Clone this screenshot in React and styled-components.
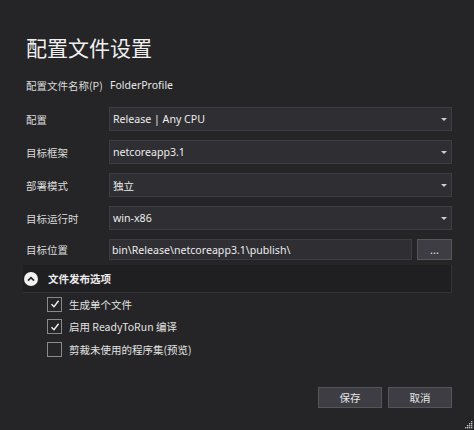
import React from "react";
import styled, { createGlobalStyle } from "styled-components";

const Global = createGlobalStyle`
  html, body { margin: 0; padding: 0; background: #252527; }
  body { font-family: "Noto Sans", "Noto Sans CJK SC", sans-serif; }
`;

const Dialog = styled.div`
  position: relative;
  width: 474px;
  height: 430px;
  box-sizing: border-box;
  background: #252527;
  color: #e6e6e6;
  padding: 33px 22px 0 26px;
  display: flex;
  flex-direction: column;
  font-size: 10.5px;
  font-family: "Noto Sans CJK SC", "Noto Sans", sans-serif;
`;

const Title = styled.h1`
  margin: 0;
  font-size: 21px;
  font-weight: 400;
  line-height: 28px;
  color: #f0f0f0;
`;

const NameRow = styled.div`
  display: flex;
  align-items: center;
  margin-top: 14px;
  height: 20px;
`;

const Label = styled.div`
  width: ${(p) => p.w || 83}px;
  flex: none;
  color: #dcdcdc;
  white-space: nowrap;
`;

const Value = styled.div`
  color: #e8e8e8;
  font-family: "Noto Sans", "Noto Sans CJK SC", sans-serif;
  font-size: 10.5px;
`;

const Form = styled.div`
  display: grid;
  grid-template-columns: 83px 1fr;
  row-gap: 9px;
  margin-top: 12px;
  align-items: center;
`;

const Select = styled.div`
  position: relative;
  height: 24px;
  box-sizing: border-box;
  background: #2f2f33;
  border: 1px solid #3c3c42;
  display: flex;
  align-items: center;
  padding-left: 3px;
  font-family: "Noto Sans", "Noto Sans CJK SC", sans-serif;
  font-size: 10.6px;
  color: #ececec;
`;

const Arrow = styled.span`
  position: absolute;
  right: 4px;
  top: 10px;
  width: 0;
  height: 0;
  border-left: 3px solid transparent;
  border-right: 3px solid transparent;
  border-top: 3px solid #cfcfcf;
`;

const PathRow = styled.div`
  display: flex;
  gap: 5px;
`;

const TextInput = styled.div`
  flex: 1;
  height: 21px;
  box-sizing: border-box;
  background: #2f2f33;
  border: 1px solid #3c3c42;
  display: flex;
  align-items: center;
  padding-left: 2px;
  font-family: "Noto Sans", "Noto Sans CJK SC", sans-serif;
  font-size: 10.6px;
  color: #ececec;
`;

const Button = styled.div`
  width: ${(p) => p.w || 64}px;
  height: 21px;
  box-sizing: border-box;
  background: #3d3d43;
  border: 1px solid #55555c;
  display: flex;
  align-items: center;
  justify-content: center;
  color: #e6e6e6;
  font-size: 10.5px;
`;

const Section = styled.div`
  margin: 5px 0 0 -3px;
  height: 28px;
  box-sizing: border-box;
  background: #1f1f21;
  border-bottom: 1px solid #333338;
  border-right: 1px solid #333338;
  display: flex;
  align-items: center;
  padding-left: 1px;
  gap: 10px;
`;

const Chevron = styled.div`
  width: 14px;
  height: 14px;
  border-radius: 50%;
  background: #f2f2f2;
  display: flex;
  align-items: center;
  justify-content: center;
`;

const SectionTitle = styled.div`
  font-weight: 700;
  color: #ececec;
`;

const Options = styled.div`
  display: flex;
  flex-direction: column;
  gap: 8.5px;
  margin: 4px 0 0 21px;
`;

const Option = styled.div`
  display: flex;
  align-items: center;
  gap: 7px;
  height: 14px;
  color: #e2e2e2;
`;

const Box = styled.div`
  width: 15px;
  height: 15px;
  box-sizing: border-box;
  border: 1px solid #8a8a8e;
  background: #252527;
  display: flex;
  align-items: center;
  justify-content: center;
`;

const Footer = styled.div`
  margin-top: auto;
  margin-bottom: 22px;
  display: flex;
  justify-content: flex-end;
  gap: 6px;
`;

const Grip = styled.svg`
  position: absolute;
  right: 1px;
  bottom: 1px;
`;

const Check = () => (
  <svg width="10" height="10" viewBox="0 0 10 10">
    <path d="M1.5 5.2 L4 7.8 L8.6 1.8" fill="none" stroke="#f0f0f0" strokeWidth="1.4" />
  </svg>
);

const rows = [
  ["配置", "Release | Any CPU"],
  ["目标框架", "netcoreapp3.1"],
  ["部署模式", "独立"],
  ["目标运行时", "win-x86"],
];

export default function App() {
  return (
    <>
      <Global />
      <Dialog>
        <Title>配置文件设置</Title>
        <NameRow>
          <Label w={84}>配置文件名称(P)</Label>
          <Value>FolderProfile</Value>
        </NameRow>
        <Form>
          {rows.map(([l, v]) => (
            <React.Fragment key={l}>
              <Label>{l}</Label>
              <Select>
                {v}
                <Arrow />
              </Select>
            </React.Fragment>
          ))}
          <Label>目标位置</Label>
          <PathRow>
            <TextInput>bin\Release\netcoreapp3.1\publish\</TextInput>
            <Button w={35}>...</Button>
          </PathRow>
        </Form>
        <Section>
          <Chevron>
            <svg width="8" height="6" viewBox="0 0 8 6">
              <path d="M1 4.6 L4 1.6 L7 4.6" fill="none" stroke="#252527" strokeWidth="1.6" />
            </svg>
          </Chevron>
          <SectionTitle>文件发布选项</SectionTitle>
        </Section>
        <Options>
          <Option>
            <Box><Check /></Box>
            生成单个文件
          </Option>
          <Option>
            <Box><Check /></Box>
            启用 ReadyToRun 编译
          </Option>
          <Option>
            <Box />
            剪裁未使用的程序集(预览)
          </Option>
        </Options>
        <Footer>
          <Button>保存</Button>
          <Button>取消</Button>
        </Footer>
        <Grip width="8" height="8" viewBox="0 0 8 8">
          {[[6, 0], [6, 2], [4, 2], [6, 4], [4, 4], [2, 4], [6, 6], [4, 6], [2, 6], [0, 6]].map(([x, y]) => (
            <rect key={`${x}-${y}`} x={x} y={y} width="1.4" height="1.4" fill="#bdbdbd" />
          ))}
        </Grip>
      </Dialog>
    </>
  );
}
